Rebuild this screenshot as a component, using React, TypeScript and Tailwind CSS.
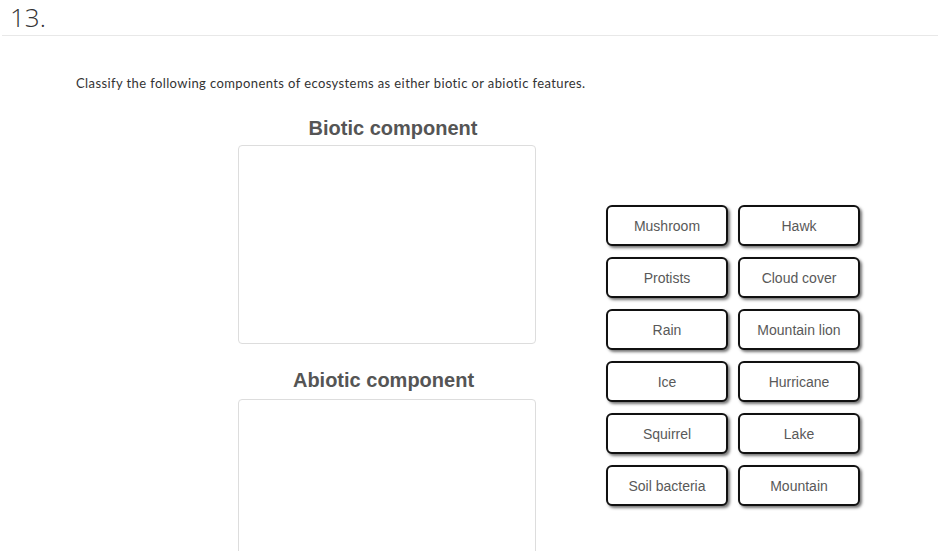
import React from "react";

const chips: string[][] = [
	["Mushroom", "Hawk"],
	["Protists", "Cloud cover"],
	["Rain", "Mountain lion"],
	["Ice", "Hurricane"],
	["Squirrel", "Lake"],
	["Soil bacteria", "Mountain"],
];

const Chip: React.FC<{ label: string }> = ({ label }) => (
	<div className="w-[122px] h-[41px] pt-[2px] flex items-center justify-center border-2 border-[#111] rounded-[6px] bg-white shadow-[2px_2px_3px_rgba(0,0,0,0.55)] text-[14px] text-[#595959]">
		{label}
	</div>
);

const App: React.FC = () => {
	return (
		<div className="w-[940px] h-[551px] overflow-hidden bg-white font-['Liberation_Sans',Arial,sans-serif]">
			<div className="pl-[10px] pt-[2px] h-[35px] text-[26px] leading-[30px] font-light text-[#333] font-['Open_Sans',sans-serif]">
				13.
			</div>
			<div className="mx-[2px] h-px bg-[#e8e8e8]" />

			<div className="pl-[76px] pt-[39px]">
				<p className="text-[13px] leading-[16px] tracking-[0.4px] text-[#333] font-['Lato',sans-serif]">
					Classify the following components of ecosystems as either biotic or abiotic features.
				</p>
			</div>

			<div className="flex pl-[238px] pt-[27px] gap-[70px]">
				<div className="w-[298px] flex flex-col">
					<h3 className="pl-[12px] text-center text-[20px] leading-[21px] font-bold text-[#555]">
						Biotic component
					</h3>
					<div className="mt-[6px] h-[199px] border border-[#ddd] rounded-[4px]" />
					<h3 className="mt-[25px] pr-[7px] text-center text-[20px] leading-[22px] font-bold text-[#555]">
						Abiotic component
					</h3>
					<div className="mt-[8px] h-[200px] border border-[#ddd] rounded-[4px]" />
				</div>

				<div className="pt-[87px] flex flex-col gap-[11px]">
					{chips.map((row, i) => (
						<div key={i} className="flex gap-[10px]">
							{row.map((c) => (
								<Chip key={c} label={c} />
							))}
						</div>
					))}
				</div>
			</div>
		</div>
	);
};

export default App;
